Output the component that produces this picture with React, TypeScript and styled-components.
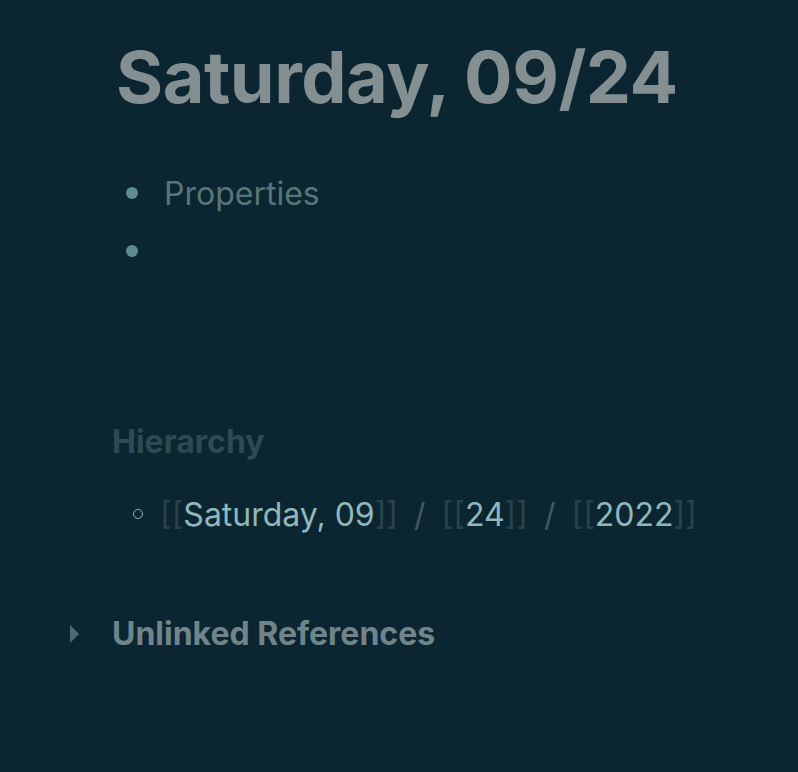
import styled, { createGlobalStyle } from "styled-components";

const Global = createGlobalStyle`
    html, body {
        margin: 0;
        padding: 0;
        background: #0b2631;
    }
    body {
        font-family: Inter, "Noto Sans", sans-serif;
    }
`

const Page = styled.div`
    width: 798px;
    height: 772px;
    background: #0b2631;
    padding: 0 0 0 112px;
    box-sizing: border-box;
    overflow: hidden;
`

const Title = styled.h1`
    margin: 0 0 0 4px;
    padding-top: 35px;
    font-size: 72px;
    line-height: 84px;
    font-weight: 700;
    color: #838f91;
    letter-spacing: -0.5px;
`

const Blocks = styled.ul`
    list-style: none;
    margin: 59px 0 0 0;
    padding: 0;
    display: flex;
    flex-direction: column;
    gap: 28px;
`

const Block = styled.li`
    display: flex;
    align-items: center;
    height: 30px;
`

const BulletCol = styled.span`
    width: 40px;
    height: 30px;
    display: flex;
    align-items: center;
    justify-content: center;
`

const Dot = styled.span<{ $hollow?: boolean }>`
    width: ${p => (p.$hollow ? "10px" : "12px")};
    height: ${p => (p.$hollow ? "10px" : "12px")};
    margin-left: ${p => (p.$hollow ? "12px" : "0")};
    border-radius: 50%;
    box-sizing: border-box;
    background: ${p => (p.$hollow ? "transparent" : "#5e8b8f")};
    border: ${p => (p.$hollow ? "1.3px solid #8fb3b6" : "none")};
`

const BlockText = styled.span`
    margin-left: 12px;
    font-size: 32px;
    color: #5a7479;
`

const Section = styled.section<{ $top: number }>`
    margin-top: ${p => p.$top}px;
`

const SectionHead = styled.div`
    font-size: 32px;
    line-height: 36px;
    font-weight: 700;
    color: #2e4a52;
`

const Crumbs = styled.div`
    margin-top: 36px;
    display: flex;
    align-items: center;
    height: 36px;
`

const CrumbText = styled.span`
    margin-left: 8px;
    font-size: 32px;
    display: flex;
    align-items: center;
`

const Bracket = styled.span`
    color: #2a434b;
`

const Link = styled.span`
    color: #8fb8bb;
`

const Sep = styled.span`
    color: #3e5b63;
    margin: 0 16px;
`

const Toggle = styled.div`
    display: flex;
    align-items: center;
    margin-left: -42px;
`

const Arrow = styled.svg`
    width: 42px;
    height: 20px;
`

const RefHead = styled(SectionHead)`
    color: #6f8589;
`

const PageLink = ({ name }: { name: string }) => (
    <span>
        <Bracket>[[</Bracket>
        <Link>{name}</Link>
        <Bracket>]]</Bracket>
    </span>
)

export default function App() {
    return (
        <Page>
            <Global />
            <Title>Saturday, 09/24</Title>
            <Blocks>
                <Block>
                    <BulletCol><Dot /></BulletCol>
                    <BlockText>Properties</BlockText>
                </Block>
                <Block>
                    <BulletCol><Dot /></BulletCol>
                </Block>
            </Blocks>
            <Section $top={158}>
                <SectionHead>Hierarchy</SectionHead>
                <Crumbs>
                    <BulletCol><Dot $hollow /></BulletCol>
                    <CrumbText>
                        <PageLink name="Saturday, 09" />
                        <Sep>/</Sep>
                        <PageLink name="24" />
                        <Sep>/</Sep>
                        <PageLink name="2022" />
                    </CrumbText>
                </Crumbs>
            </Section>
            <Section $top={84}>
                <Toggle>
                    <Arrow viewBox="0 0 42 20">
                        <path d="M0 1 L9 10 L0 19 Z" fill="#4a6d74" />
                    </Arrow>
                    <RefHead>Unlinked References</RefHead>
                </Toggle>
            </Section>
        </Page>
    )
}
